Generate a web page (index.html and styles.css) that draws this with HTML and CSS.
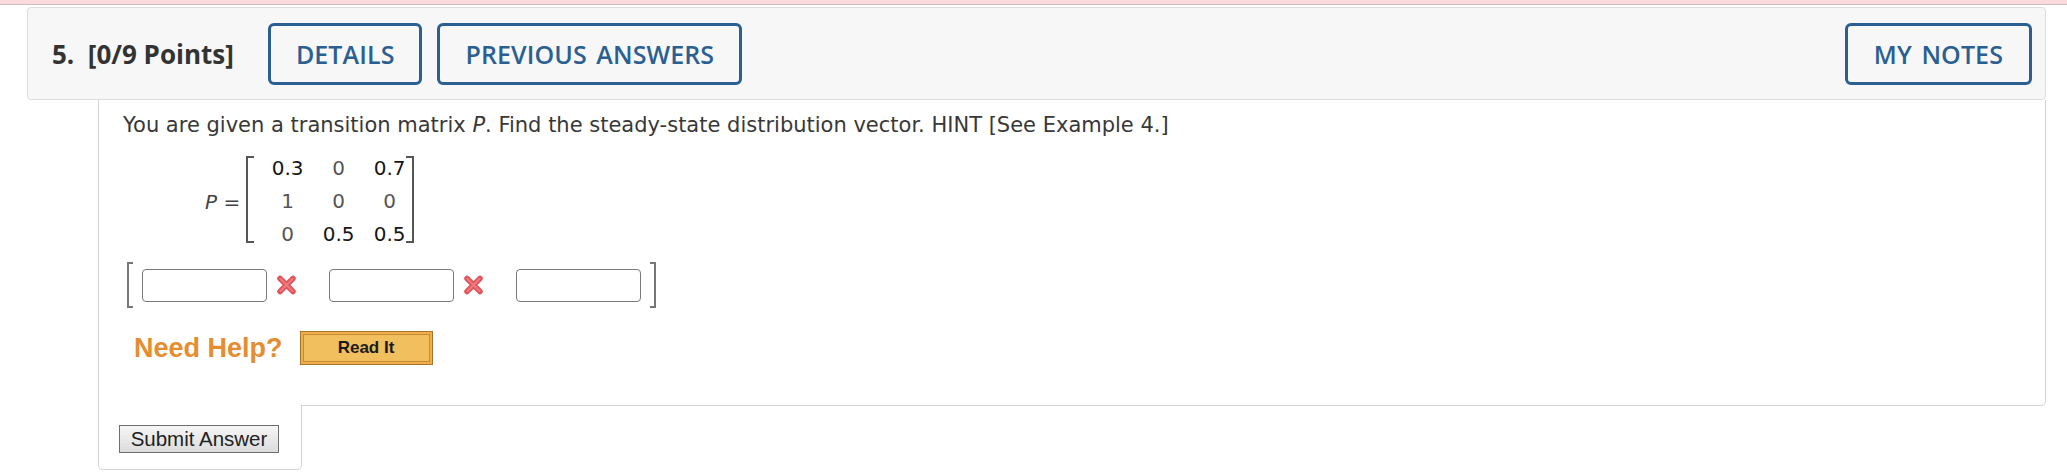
FILE: index.html
```html
<!DOCTYPE html>
<html lang="en">
<head>
<meta charset="utf-8">
<title>Question 5</title>
<link rel="stylesheet" href="styles.css">
</head>
<body>
<div class="topbar"></div>
<div class="page">
  <div class="qhead">
    <span class="qnum">5.&nbsp; [0/9 Points]</span>
    <button class="hbtn">DETAILS</button>
    <button class="hbtn">PREVIOUS ANSWERS</button>
    <button class="hbtn notes">MY NOTES</button>
  </div>
  <div class="qbody">
    <p class="prompt">You are given a transition matrix <i>P</i>. Find the steady-state distribution vector. HINT [See Example 4.]</p>
    <div class="matrix-eq">
      <span class="lhs"><i>P</i> =</span>
      <span class="br br-l"></span>
      <div class="grid">
        <span class="dec">0.3</span><span class="int">0</span><span class="dec">0.7</span>
        <span class="int">1</span><span class="int">0</span><span class="int">0</span>
        <span class="int">0</span><span class="dec">0.5</span><span class="dec">0.5</span>
      </div>
      <span class="br br-r"></span>
    </div>
    <div class="answer">
      <span class="abr abr-l"></span>
      <input class="ans first" type="text">
      <svg class="xmark" viewBox="0 0 21 20" aria-hidden="true"><path d="M4 3.5 L17 16.5 M17 3.5 L4 16.5" stroke="#e2545a" stroke-width="5.5" stroke-linecap="round"/><path d="M4.5 4 L16.5 16 M16.5 4 L4.5 16" stroke="#ee7a7f" stroke-width="2" stroke-linecap="round"/></svg>
      <input class="ans" type="text">
      <svg class="xmark" viewBox="0 0 21 20" aria-hidden="true"><path d="M4 3.5 L17 16.5 M17 3.5 L4 16.5" stroke="#e2545a" stroke-width="5.5" stroke-linecap="round"/><path d="M4.5 4 L16.5 16 M16.5 4 L4.5 16" stroke="#ee7a7f" stroke-width="2" stroke-linecap="round"/></svg>
      <input class="ans" type="text">
      <span class="abr abr-r"></span>
    </div>
    <div class="help">
      <span class="need">Need Help?</span>
      <button class="readit">Read It</button>
    </div>
  </div>
  <div class="submit-tab"><button class="submit">Submit Answer</button></div>
</div>
</body>
</html>
```
FILE: styles.css
```css
html, body {
  margin: 0;
  background: #ffffff;
}

.topbar {
  height: 4px;
  background: #fadadd;
  border-bottom: 1px solid #cdbdbf;
}

.page {
  padding: 2px 21px 0 27px;
}

.qhead {
  display: flex;
  align-items: center;
  height: 91px;
  border: 1px solid #dcdcdc;
  border-radius: 4px;
  background: #f7f7f7;
  padding: 0 13px 0 24px;
}

.qnum {
  font: 700 26px "Open Sans", sans-serif;
  color: #333333;
  margin-right: 34px;
  white-space: nowrap;
}

.hbtn {
  font: 600 25px "Open Sans", sans-serif;
  letter-spacing: 0.1px;
  word-spacing: 3px;
  color: #2b5f92;
  background: transparent;
  border: 3px solid #2b5f92;
  border-radius: 6px;
  height: 62px;
  padding: 0 25px;
  margin: 0 15px 0 0;
}

.hbtn.notes {
  margin-left: auto;
  margin-right: 0;
  padding: 0 26px;
}

.qbody {
  margin-left: 71px;
  border: 1px solid #d4d4d4;
  border-top: 0;
  border-bottom-right-radius: 5px;
  padding: 12px 0 40px 24px;
}

.prompt {
  margin: 0;
  font: 21px/26px "DejaVu Sans", Verdana, sans-serif;
  color: #383838;
}

.matrix-eq {
  display: flex;
  align-items: flex-start;
  margin: 14px 0 0 82px;
  font: 20px/33px "DejaVu Sans", Verdana, sans-serif;
  color: #3a3a3a;
}

.lhs {
  align-self: center;
  line-height: normal;
  margin-right: 6px;
  color: #444444;
}

.br {
  width: 6px;
  height: 83px;
  margin-top: 4px;
  border: 2px solid #555555;
}

.br-l { border-right: 0; }
.br-r { border-left: 0; }

.grid {
  display: grid;
  grid-template-columns: repeat(3, 33px);
  grid-auto-rows: 33px;
  column-gap: 18px;
  padding-left: 17px;
  text-align: center;
}

.dec { color: #161616; }
.int { color: #555555; }

.answer {
  display: flex;
  align-items: center;
  height: 46px;
  margin: 11px 0 0 4px;
}

.abr {
  width: 4px;
  height: 42px;
  border: 2px solid #777777;
}

.abr-l { border-right: 0; }
.abr-r { border-left: 0; margin-left: 9px; }

.ans {
  box-sizing: border-box;
  width: 125px;
  height: 33px;
  margin: 0;
  padding: 0 4px;
  border: 1px solid #7a7a7a;
  border-radius: 4px;
  background: #ffffff;
}

.ans.first { margin-left: 9px; }

.xmark {
  width: 21px;
  height: 20px;
  margin: 0 32px 0 9px;
}

.help {
  display: flex;
  align-items: center;
  height: 34px;
  margin: 23px 0 0 11px;
}

.need {
  font: 700 27px "Liberation Sans", Arial, sans-serif;
  color: #e68d30;
  margin-right: 17px;
}

.readit {
  box-sizing: border-box;
  width: 133px;
  height: 34px;
  padding: 0;
  border: 1px solid #a8732c;
  background: #f2bf5e;
  box-shadow: inset 0 0 0 2px #f0ae48, inset 0 0 0 3px #c98a36;
  font: 700 17px "Liberation Sans", Arial, sans-serif;
  color: #1b1b1b;
}

.submit-tab {
  margin: -1px 0 0 71px;
  width: 161px;
  padding: 20px 21px 16px 20px;
  border: 1px solid #d4d4d4;
  border-top: 0;
  border-radius: 0 0 5px 5px;
  background: #ffffff;
}

.submit {
  display: block;
  box-sizing: border-box;
  width: 160px;
  height: 28px;
  padding: 0;
  border: 1px solid #6e6e6e;
  border-radius: 0;
  background: linear-gradient(#f6f6f6, #dcdcdc);
  font: 20.5px "Liberation Sans", Arial, sans-serif;
  color: #222222;
}
```
